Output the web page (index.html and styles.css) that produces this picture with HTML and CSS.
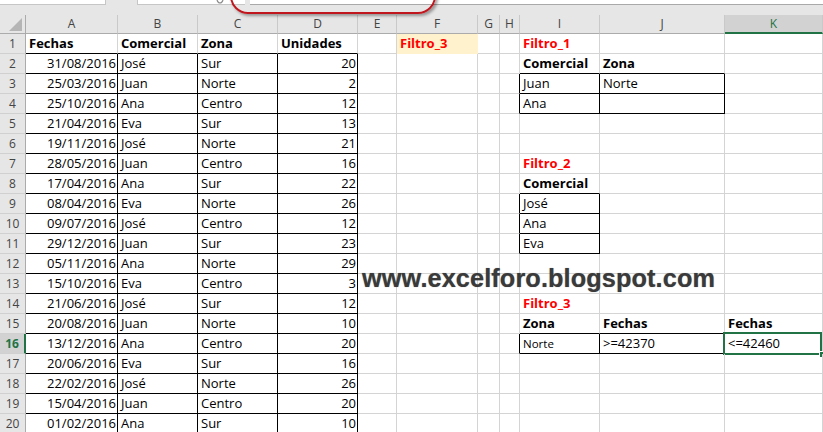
FILE: index.html
```html
<!DOCTYPE html>
<html lang="es">
<head>
<meta charset="utf-8">
<title>Filtro avanzado</title>
<link rel="stylesheet" href="styles.css">
</head>
<body>
<div class="app">
  <div class="topbar">
    <div class="namebox"></div>
    <div class="fxbox"><svg class="fxglyph" width="8" height="4" viewBox="0 0 8 4"><path d="M1 0 Q2 3 4 3 Q6 3 7 0" fill="none" stroke="#8a8a8a" stroke-width="1.2"/></svg></div>
    <div class="formulabox"></div>
    <div class="annot"></div>
  </div>
  <div class="sheet">
    <div class="h corner"><svg width="13" height="13" viewBox="0 0 13 13"><polygon points="13,0 13,13 0,13" fill="#b5b5b5"/></svg></div>
    <div class="h">A</div><div class="h">B</div><div class="h">C</div><div class="h">D</div><div class="h">E</div><div class="h">F</div><div class="h">G</div><div class="h">H</div><div class="h">I</div><div class="h">J</div><div class="h hsel">K</div>

    <div class="r">1</div><div class="c b bb">Fechas</div><div class="c b bb">Comercial</div><div class="c b bb">Zona</div><div class="c b bb">Unidades</div><div class="c"></div><div class="c b red yel">Filtro_3</div><div class="c"></div><div class="c"></div><div class="c b red">Filtro_1</div><div class="c"></div><div class="c"></div>

    <div class="r">2</div><div class="c n bx">31/08/2016</div><div class="c bx">José</div><div class="c bx">Sur</div><div class="c n bx">20</div><div class="c"></div><div class="c"></div><div class="c"></div><div class="c"></div><div class="c b bb">Comercial</div><div class="c b bb">Zona</div><div class="c"></div>

    <div class="r">3</div><div class="c n bx">25/03/2016</div><div class="c bx">Juan</div><div class="c bx">Norte</div><div class="c n bx">2</div><div class="c"></div><div class="c"></div><div class="c"></div><div class="c br"></div><div class="c bx">Juan</div><div class="c bx">Norte</div><div class="c"></div>

    <div class="r">4</div><div class="c n bx">25/10/2016</div><div class="c bx">Ana</div><div class="c bx">Centro</div><div class="c n bx">12</div><div class="c"></div><div class="c"></div><div class="c"></div><div class="c br"></div><div class="c bx">Ana</div><div class="c bx"></div><div class="c"></div>

    <div class="r">5</div><div class="c n bx">21/04/2016</div><div class="c bx">Eva</div><div class="c bx">Sur</div><div class="c n bx">13</div><div class="c"></div><div class="c"></div><div class="c"></div><div class="c"></div><div class="c"></div><div class="c"></div><div class="c"></div>

    <div class="r">6</div><div class="c n bx">19/11/2016</div><div class="c bx">José</div><div class="c bx">Norte</div><div class="c n bx">21</div><div class="c"></div><div class="c"></div><div class="c"></div><div class="c"></div><div class="c"></div><div class="c"></div><div class="c"></div>

    <div class="r">7</div><div class="c n bx">28/05/2016</div><div class="c bx">Juan</div><div class="c bx">Centro</div><div class="c n bx">16</div><div class="c"></div><div class="c"></div><div class="c"></div><div class="c"></div><div class="c b red">Filtro_2</div><div class="c"></div><div class="c"></div>

    <div class="r">8</div><div class="c n bx">17/04/2016</div><div class="c bx">Ana</div><div class="c bx">Sur</div><div class="c n bx">22</div><div class="c"></div><div class="c"></div><div class="c"></div><div class="c"></div><div class="c b bb">Comercial</div><div class="c"></div><div class="c"></div>

    <div class="r">9</div><div class="c n bx">08/04/2016</div><div class="c bx">Eva</div><div class="c bx">Norte</div><div class="c n bx">26</div><div class="c"></div><div class="c"></div><div class="c"></div><div class="c br"></div><div class="c bx">José</div><div class="c"></div><div class="c"></div>

    <div class="r">10</div><div class="c n bx">09/07/2016</div><div class="c bx">José</div><div class="c bx">Centro</div><div class="c n bx">12</div><div class="c"></div><div class="c"></div><div class="c"></div><div class="c br"></div><div class="c bx">Ana</div><div class="c"></div><div class="c"></div>

    <div class="r">11</div><div class="c n bx">29/12/2016</div><div class="c bx">Juan</div><div class="c bx">Sur</div><div class="c n bx">23</div><div class="c"></div><div class="c"></div><div class="c"></div><div class="c br"></div><div class="c bx">Eva</div><div class="c"></div><div class="c"></div>

    <div class="r">12</div><div class="c n bx">05/11/2016</div><div class="c bx">Ana</div><div class="c bx">Norte</div><div class="c n bx">29</div><div class="c"></div><div class="c"></div><div class="c"></div><div class="c"></div><div class="c"></div><div class="c"></div><div class="c"></div>

    <div class="r">13</div><div class="c n bx">15/10/2016</div><div class="c bx">Eva</div><div class="c bx">Centro</div><div class="c n bx">3</div><div class="c"></div><div class="c"></div><div class="c"></div><div class="c"></div><div class="c"></div><div class="c"></div><div class="c"></div>

    <div class="r">14</div><div class="c n bx">21/06/2016</div><div class="c bx">José</div><div class="c bx">Sur</div><div class="c n bx">12</div><div class="c"></div><div class="c"></div><div class="c"></div><div class="c"></div><div class="c b red">Filtro_3</div><div class="c"></div><div class="c"></div>

    <div class="r">15</div><div class="c n bx">20/08/2016</div><div class="c bx">Juan</div><div class="c bx">Norte</div><div class="c n bx">10</div><div class="c"></div><div class="c"></div><div class="c"></div><div class="c"></div><div class="c b bb">Zona</div><div class="c b bb">Fechas</div><div class="c b">Fechas</div>

    <div class="r rsel">16</div><div class="c n bx">13/12/2016</div><div class="c bx">Ana</div><div class="c bx">Centro</div><div class="c n bx">20</div><div class="c"></div><div class="c"></div><div class="c"></div><div class="c br"></div><div class="c bx sm">Norte</div><div class="c bx">&gt;=42370</div><div class="c active">&lt;=42460<span class="selbox"></span><span class="handle"></span></div>

    <div class="r">17</div><div class="c n bx">20/06/2016</div><div class="c bx">Eva</div><div class="c bx">Sur</div><div class="c n bx">16</div><div class="c"></div><div class="c"></div><div class="c"></div><div class="c"></div><div class="c"></div><div class="c"></div><div class="c"></div>

    <div class="r">18</div><div class="c n bx">22/02/2016</div><div class="c bx">José</div><div class="c bx">Norte</div><div class="c n bx">26</div><div class="c"></div><div class="c"></div><div class="c"></div><div class="c"></div><div class="c"></div><div class="c"></div><div class="c"></div>

    <div class="r">19</div><div class="c n bx">15/04/2016</div><div class="c bx">Juan</div><div class="c bx">Centro</div><div class="c n bx">20</div><div class="c"></div><div class="c"></div><div class="c"></div><div class="c"></div><div class="c"></div><div class="c"></div><div class="c"></div>

    <div class="r">20</div><div class="c n bx">01/02/2016</div><div class="c bx">Ana</div><div class="c bx">Sur</div><div class="c n bx">10</div><div class="c"></div><div class="c"></div><div class="c"></div><div class="c"></div><div class="c"></div><div class="c"></div><div class="c"></div>
  </div>
  <div class="watermark">www.excelforo.blogspot.com</div>
</div>
</body>
</html>
```

FILE: styles.css
```css
html, body {
  margin: 0;
  padding: 0;
  background: #ffffff;
}
.app {
  position: relative;
  width: 823px;
  height: 432px;
  overflow: hidden;
  font-family: "Open Sans", "Liberation Sans", sans-serif;
}
.topbar {
  position: relative;
  height: 15px;
  background: #e6e6e6;
  display: flex;
  align-items: flex-start;
}
.namebox {
  width: 105px;
  height: 4px;
  background: #ffffff;
  border-right: 1px solid #c6c6c6;
  border-bottom: 1px solid #c6c6c6;
}
.fxbox {
  position: relative;
  margin-left: 31px;
  width: 107px;
  height: 4px;
  background: #ffffff;
  border-left: 1px solid #c6c6c6;
  border-bottom: 1px solid #c6c6c6;
  overflow: hidden;
}
.fxglyph {
  position: absolute;
  left: 78px;
  top: 0;
}
.formulabox {
  margin-left: 5px;
  flex: 1;
  height: 4px;
  background: #ffffff;
  border-bottom: 1px solid #a9a9a9;
}
.annot {
  position: absolute;
  left: 230px;
  top: -31px;
  width: 202px;
  height: 41px;
  border: 2px solid #c0171f;
  border-radius: 18px;
  box-shadow: 2px 2px 3px rgba(0,0,0,0.35);
}
.sheet {
  display: grid;
  grid-template-columns: 26px 92px 80px 80px 80px 39px 81px 22px 20px 80px 125px 98px;
  grid-template-rows: 19px;
  grid-auto-rows: 20px;
}
.h {
  box-sizing: border-box;
  background: #e6e6e6;
  border-right: 1px solid #c9c9c9;
  border-bottom: 1px solid #ababab;
  font-size: 12px;
  line-height: 18px;
  color: #444;
  text-align: center;
}
.corner {
  border-right: 1px solid #ababab;
  display: flex;
  align-items: flex-end;
  justify-content: flex-end;
  padding: 0 3px 2px 0;
}
.hsel {
  background: #d2d2d2;
  color: #217346;
  border-bottom: 2px solid #217346;
  line-height: 17px;
}
.r {
  box-sizing: border-box;
  background: #e6e6e6;
  border-right: 1px solid #ababab;
  border-bottom: 1px solid #d0d0d0;
  font-size: 12px;
  line-height: 19px;
  color: #444;
  text-align: center;
}
.rsel {
  background: #d2d2d2;
  color: #217346;
  font-weight: bold;
  border-right: 2px solid #217346;
}
.c {
  position: relative;
  box-sizing: border-box;
  border-right: 1px solid #d4d4d4;
  border-bottom: 1px solid #d4d4d4;
  font-size: 13px;
  line-height: 19px;
  color: #000;
  padding: 0 2px 0 3px;
  white-space: nowrap;
  overflow: visible;
}
.n {
  text-align: right;
  padding-right: 1px;
}
.b {
  font-weight: bold;
}
.red {
  color: #ff0000;
}
.yel {
  background: #fff2cc;
  border-color: transparent;
}
.bx {
  border-right-color: #000;
  border-bottom-color: #000;
}
.bb {
  border-bottom-color: #000;
}
.br {
  border-right-color: #000;
}
.sm {
  font-size: 11.5px;
}
.selbox {
  position: absolute;
  left: -2px;
  top: -2px;
  right: 0;
  bottom: -2px;
  border: 2px solid #217346;
}
.handle {
  position: absolute;
  right: -4px;
  bottom: -5px;
  width: 5px;
  height: 5px;
  background: #217346;
  border: 1px solid #ffffff;
}
.watermark {
  position: absolute;
  left: 362px;
  top: 266px;
  font-family: "Liberation Sans", Arial, sans-serif;
  font-weight: bold;
  font-size: 25.3px;
  letter-spacing: 0.1px;
  line-height: 25px;
  color: #3a3a3a;
  text-shadow: 0 0 1px rgba(0,0,0,0.45);
  white-space: nowrap;
}
```
